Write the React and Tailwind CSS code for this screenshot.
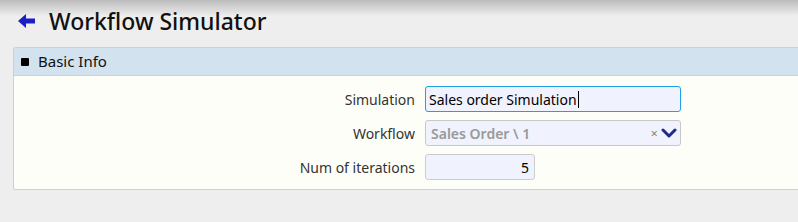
import React from "react";

const fieldFont = { fontFamily: '"Segoe UI", "Noto Sans", "Open Sans", sans-serif' };

const BackArrow = () => (
  <svg width="17" height="14" viewBox="0 0 17 14" className="block">
    <polygon points="0,7 8,0 8,4.5 17,4.5 17,9.5 8,9.5 8,14" fill="#1c1cc8" />
  </svg>
);

const Chevron = () => (
  <svg width="16" height="10" viewBox="0 0 16 10" className="block">
    <polyline points="2,2 8,8 14,2" fill="none" stroke="#1e2a8c" strokeWidth="3" strokeLinecap="round" strokeLinejoin="round" />
  </svg>
);

const Row = ({ label, children }) => (
  <div className="flex items-center h-[26px]">
    <div className="w-[411px] pr-[10px] text-right text-[14px] text-[#333]">{label}</div>
    {children}
  </div>
);

export default function App() {
  return (
    <div
      className="w-[798px] h-[222px] overflow-hidden bg-[#eeeeee] bg-[linear-gradient(#bcbcbc,#eeeeee_16px)]"
      style={fieldFont}
    >
      {/* Title */}
      <div className="flex items-center h-[28px] mt-[7px] pl-[18px]">
        <BackArrow />
        <h1 className="ml-[14px] text-[23px] leading-[28px] font-medium text-[#111]">Workflow Simulator</h1>
      </div>

      {/* Basic Info panel */}
      <div className="mt-[12px] ml-[13px] border border-r-0 border-[#cfcfcf] rounded-l-[3px] overflow-hidden">
        <div className="flex items-center h-[28px] bg-[#d2e3ef] border-b border-[#c6d2db] pl-[7px]">
          <span className="w-[8px] h-[8px] bg-black rounded-[1px]" />
          <span className="ml-[9px] text-[15px] text-[#111]">Basic Info</span>
        </div>
        <div className="bg-[#fefef9] h-[113px] pt-[10px] flex flex-col gap-[8px]">
          <Row label="Simulation">
            <div className="w-[256px] h-[26px] border border-[#1ea0e6] rounded-[3px] bg-[#f0f3fe] flex items-center px-[3px] text-[14px] text-black">
              Sales order Simulation
              <span className="w-px h-[17px] bg-black ml-px" />
            </div>
          </Row>
          <Row label="Workflow">
            <div className="w-[256px] h-[26px] border border-[#c8c8c8] rounded-[3px] bg-[#f0f3fd] flex items-center pl-[5px] pr-[3px]">
              <span className="flex-1 text-[14px] font-semibold text-[#999]">Sales Order \ 1</span>
              <span className="text-[13px] text-[#888] leading-none mr-[3px]">×</span>
              <Chevron />
            </div>
          </Row>
          <Row label="Num of iterations">
            <div className="w-[110px] h-[26px] border border-[#cccccc] rounded-[3px] bg-[#f0f3fe] flex items-center justify-end px-[5px] text-[14px] text-black">
              5
            </div>
          </Row>
        </div>
      </div>
    </div>
  );
}
